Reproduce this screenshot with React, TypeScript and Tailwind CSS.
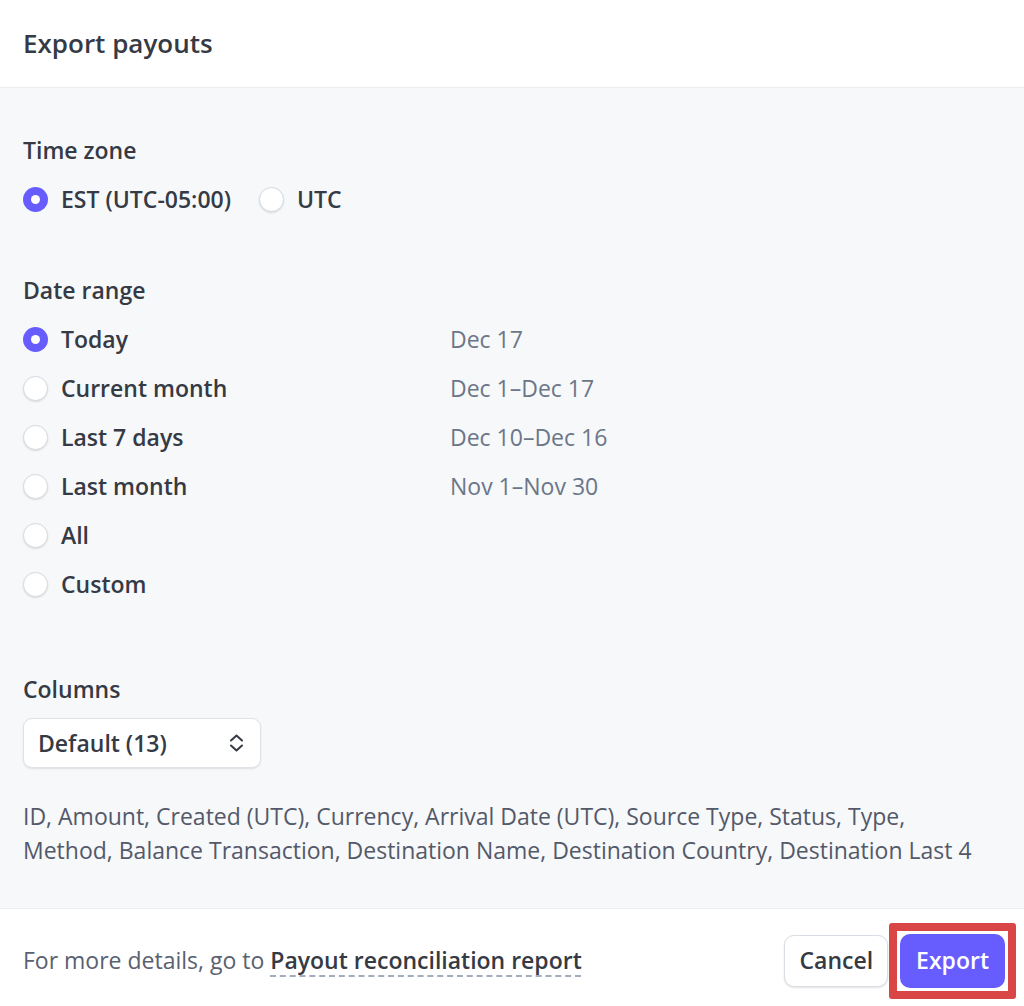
import { useState } from "react";

const DATE_OPTIONS = [
  { id: "today", label: "Today", range: "Dec 17" },
  { id: "month", label: "Current month", range: "Dec 1–Dec 17" },
  { id: "7days", label: "Last 7 days", range: "Dec 10–Dec 16" },
  { id: "lastmonth", label: "Last month", range: "Nov 1–Nov 30" },
  { id: "all", label: "All", range: "" },
  { id: "custom", label: "Custom", range: "" },
];

const COLUMNS =
  "ID, Amount, Created (UTC), Currency, Arrival Date (UTC), Source Type, Status, Type, Method, Balance Transaction, Destination Name, Destination Country, Destination Last 4";

function Radio({ checked }: { checked: boolean }) {
  if (checked) {
    return (
      <span className="flex h-[25px] w-[25px] shrink-0 items-center justify-center rounded-full bg-[#675dff]">
        <span className="h-[9px] w-[9px] rounded-full bg-white" />
      </span>
    );
  }
  return (
    <span className="h-[25px] w-[25px] shrink-0 rounded-full border border-[#d5dbe1] bg-white shadow-[0_1px_2px_rgba(0,0,0,0.12)]" />
  );
}

export default function App() {
  const [tz, setTz] = useState("est");
  const [range, setRange] = useState("today");

  return (
    <div className="flex min-h-screen flex-col bg-white text-[23px] text-[#353a44] [font-family:'Open_Sans','Noto_Sans',sans-serif]">
      <header className="flex h-[88px] items-center border-b border-[#ebeef1] px-[23px]">
        <h1 className="text-[26px] font-semibold">Export payouts</h1>
      </header>

      <main className="bg-[#f6f8fa] px-[23px] pb-[41px] pt-[38px]">
        <div className="flex h-[49px] items-center font-semibold">Time zone</div>
        <div className="flex h-[49px] items-center gap-[28px]">
          <button onClick={() => setTz("est")} className="flex items-center gap-[13px] font-semibold">
            <Radio checked={tz === "est"} />
            EST (UTC-05:00)
          </button>
          <button onClick={() => setTz("utc")} className="flex items-center gap-[13px] font-semibold">
            <Radio checked={tz === "utc"} />
            UTC
          </button>
        </div>

        <div className="mt-[42px] flex h-[49px] items-center font-semibold">Date range</div>
        {DATE_OPTIONS.map((opt) => (
          <button
            key={opt.id}
            onClick={() => setRange(opt.id)}
            className="grid h-[49px] w-full grid-cols-[427px_1fr] items-center text-left"
          >
            <span className="flex items-center gap-[13px] font-semibold">
              <Radio checked={range === opt.id} />
              {opt.label}
            </span>
            <span className="text-[#6c7688]">{opt.range}</span>
          </button>
        ))}

        <div className="mt-[56px] flex h-[49px] items-center font-semibold">Columns</div>
        <button className="mt-[4px] flex h-[50px] w-[238px] items-center justify-between rounded-[9px] border border-[#dfe3e8] bg-white pl-[14px] pr-[15px] font-semibold shadow-[0_1px_2px_rgba(0,0,0,0.1)]">
          Default (13)
          <svg width="17" height="20" viewBox="0 0 17 20" fill="none" stroke="#353a44" strokeWidth="2" strokeLinecap="round" strokeLinejoin="round">
            <path d="M3 7.5 8.5 2.5 14 7.5" />
            <path d="M3 12.5 8.5 17.5 14 12.5" />
          </svg>
        </button>

        <p className="mt-[31px] max-w-[950px] leading-[34px] text-[#545969]">{COLUMNS}</p>
      </main>

      <footer className="flex h-[98px] items-center justify-between border-t border-[#ebeef1] bg-white pl-[23px] pr-[19px] pt-[6px]">
        <p className="text-[#596171]">
          For more details, go to{" "}
          <a className="font-semibold text-[#353a44] underline decoration-[#a3acba] decoration-dashed decoration-2 underline-offset-[6px]">
            Payout reconciliation report
          </a>
        </p>
        <div className="flex items-center gap-[12px]">
          <button className="h-[52px] rounded-[10px] border border-[#d8dee4] bg-white px-[14px] font-semibold text-[#353a44] shadow-[0_1px_2px_rgba(0,0,0,0.12)]">
            Cancel
          </button>
          <button className="relative h-[54px] rounded-[10px] bg-[#675dff] px-[16px] font-semibold text-white">
            Export
            <span className="pointer-events-none absolute -inset-[11px] rounded-[3px] border-[8px] border-[#d94646]" />
          </button>
        </div>
      </footer>
    </div>
  );
}
